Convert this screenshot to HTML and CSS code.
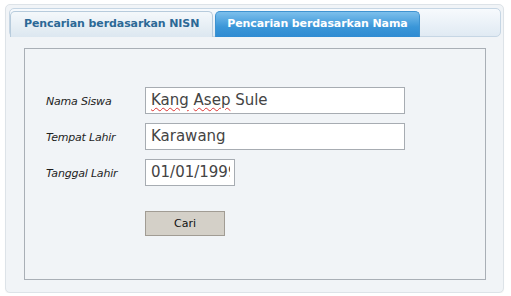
FILE: index.html
```html
<!DOCTYPE html>
<html>
<head>
<meta charset="utf-8">
<link rel="stylesheet" href="styles.css">
</head>
<body>
<div class="widget">
  <div class="tabbar">
    <div class="tab">Pencarian berdasarkan NISN</div>
    <div class="tab active">Pencarian berdasarkan Nama</div>
  </div>
  <div class="panel">
    <div class="form">
      <label class="label">Nama Siswa</label>
      <div class="input wide"><span class="value"><span class="spell">Kang</span> <span class="spell">Asep</span> Sule</span></div>
      <label class="label">Tempat Lahir</label>
      <div class="input wide"><span class="value">Karawang</span></div>
      <label class="label">Tanggal Lahir</label>
      <div class="input date"><span class="value">01/01/1999</span></div>
    </div>
    <div class="actions">
      <button class="btn">Cari</button>
    </div>
  </div>
</div>
</body>
</html>
```

FILE: styles.css
```css
html, body {
  margin: 0;
  padding: 0;
  background: #ffffff;
}
body {
  font-family: "DejaVu Sans", Verdana, sans-serif;
  padding: 4px 0 0 5px;
}
.widget {
  box-sizing: border-box;
  width: 499px;
  height: 289px;
  border: 1px solid #dde3e8;
  border-radius: 5px;
  background: #f1f4f7;
  padding: 3px 2px 0 3px;
  box-shadow: 0 1px 1px rgba(0,0,0,0.05);
}
.tabbar {
  box-sizing: border-box;
  height: 29px;
  border: 1px solid #c6d6e4;
  border-radius: 5px;
  background: linear-gradient(#f7fafd, #e0eaf3);
  display: flex;
  align-items: flex-end;
  gap: 2px;
}
.tab {
  box-sizing: border-box;
  height: 26px;
  margin-bottom: -1px;
  border: 1px solid #b7cbdc;
  border-bottom: none;
  border-radius: 5px 5px 0 0;
  background: linear-gradient(#f4f8fb, #dce7f0);
  color: #2c6996;
  font-weight: bold;
  font-size: 11px;
  letter-spacing: -0.1px;
  line-height: 24px;
  padding: 0 13px;
  white-space: nowrap;
}
.tab.active {
  padding: 0 11px;
  border-color: #3f93d0;
  background: linear-gradient(#7cbfec, #3a96d8 60%, #2f8bd2);
  color: #ffffff;
}
.panel {
  box-sizing: border-box;
  margin: 11px 15px 0 15px;
  height: 232px;
  border: 1px solid #a9afb6;
  background: #f1f4f7;
  padding: 38px 0 0 21px;
}
.form {
  display: grid;
  grid-template-columns: 99px auto;
  row-gap: 9px;
  align-items: center;
}
.label {
  font-style: italic;
  font-size: 11px;
  color: #1e1e1e;
  letter-spacing: -0.2px;
  padding-top: 2px;
}
.input {
  box-sizing: border-box;
  height: 27px;
  border: 1px solid #a7acb2;
  background: #ffffff;
  font-size: 15px;
  color: #444444;
  line-height: 25px;
  padding: 0 4px 0 5px;
  white-space: nowrap;
}
.value {
  display: block;
  overflow: hidden;
}
.input.wide {
  width: 260px;
}
.input.date {
  width: 90px;
}
.spell {
  text-decoration: underline wavy #d33;
  text-decoration-thickness: 1px;
  text-underline-offset: 2px;
}
.actions {
  padding: 25px 0 0 99px;
}
.btn {
  box-sizing: border-box;
  width: 80px;
  height: 25px;
  border: 1px solid #a19c94;
  background: #d4d0c8;
  font-family: "DejaVu Sans", Verdana, sans-serif;
  font-size: 11px;
  color: #111;
  padding: 0;
}
```
